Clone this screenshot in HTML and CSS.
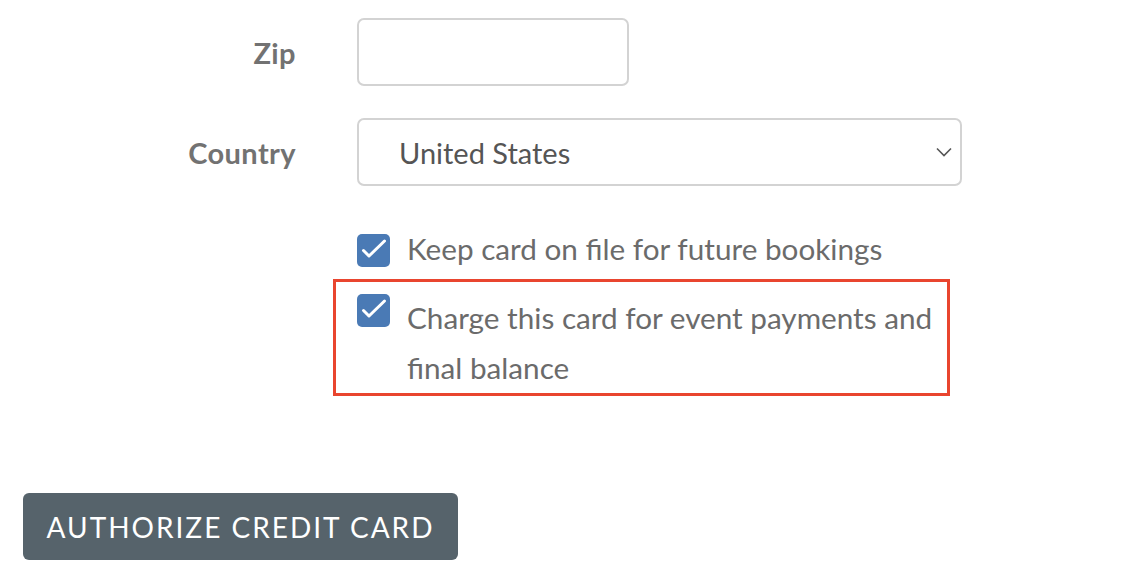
FILE: index.html
```html
<!DOCTYPE html>
<html lang="en">
<head>
  <meta charset="UTF-8" />
  <meta name="viewport" content="width=device-width, initial-scale=1.0">
  <title>Authorize credit card</title>
  <link rel="stylesheet" href="styles.css">
</head>
<body>

  <form class="card-form">
    <div class="form-row">
      <label for="zip">Zip</label>
      <input type="text" id="zip" class="zip-input" />
    </div>

    <div class="form-row">
      <label for="country">Country</label>
      <div class="select-wrap">
        <select id="country">
          <option>United States</option>
          <option>Canada</option>
        </select>
        <svg class="chevron" width="16" height="10" viewBox="0 0 16 10">
          <path d="M1 1.5 L8 8.5 L15 1.5" fill="none" stroke="#555" stroke-width="1.6" />
        </svg>
      </div>
    </div>

    <div class="checks">
      <label class="check">
        <span class="box">
          <svg width="33" height="33" viewBox="0 0 33 33"><path d="M6.5 16.5 L12 22 L27.5 7" fill="none" stroke="#fff" stroke-width="3" stroke-linecap="round" stroke-linejoin="round" /></svg>
        </span>
        <span class="check-text">Keep card on file for future bookings</span>
      </label>

      <!-- выделенная опция -->
      <div class="highlight">
        <label class="check">
          <span class="box">
            <svg width="33" height="33" viewBox="0 0 33 33"><path d="M6.5 16.5 L12 22 L27.5 7" fill="none" stroke="#fff" stroke-width="3" stroke-linecap="round" stroke-linejoin="round" /></svg>
          </span>
          <span class="check-text">Charge this card for event payments and<br>final balance</span>
        </label>
      </div>
    </div>

    <button type="submit" class="btn-authorize">Authorize credit card</button>
  </form>

</body>
</html>
```

FILE: styles.css
```css
body {
  font-family: Lato, "Open Sans", sans-serif;
  background-color: #fff;
  margin: 0;
  padding: 0;
  color: #6b6b6b;
}

.card-form {
  padding-top: 18px;
}

.form-row {
  display: flex;
  align-items: center;
  gap: 61px;
  margin-bottom: 32px;
}

.form-row label {
  width: 296px;
  text-align: right;
  font-size: 29px;
  font-weight: bold;
  letter-spacing: 0.4px;
  color: #727272;
}

input,
select {
  height: 68px;
  border: 2px solid #d3d3d3;
  border-radius: 7px;
  box-sizing: border-box;
  font-family: inherit;
  font-size: 29px;
  color: #555;
  background: #fff;
}

.zip-input {
  width: 272px;
}

.select-wrap {
  position: relative;
  width: 605px;
}

.select-wrap select {
  width: 100%;
  appearance: none;
  padding-left: 40px;
}

.chevron {
  position: absolute;
  right: 10px;
  top: 29px;
  pointer-events: none;
}

.checks {
  margin-left: 333px;
  margin-top: 48px;
}

.check {
  display: flex;
  align-items: flex-start;
  gap: 17px;
  margin-left: 24px;
  font-size: 29.7px;
  line-height: 50px;
  color: #6b6b6b;
}

.box {
  flex: none;
  width: 33px;
  height: 33px;
  border-radius: 5px;
  background-color: #4a7ab5;
}

.box svg {
  display: block;
}

.check-text {
  margin-top: -10px;
}

.highlight {
  width: 611px;
  border: 3px solid #e9452f;
  padding: 12px 0 0 0;
  margin-top: 5px;
}

.highlight .check {
  margin-left: 21px;
}

.highlight .check-text {
  margin-top: -1px;
}

.btn-authorize {
  display: block;
  margin: 97px 0 0 23px;
  width: 435px;
  height: 67px;
  border: none;
  border-radius: 6px;
  background-color: #56636b;
  color: #fff;
  font-family: inherit;
  font-size: 28px;
  letter-spacing: 2px;
  text-transform: uppercase;
  cursor: pointer;
}
```
